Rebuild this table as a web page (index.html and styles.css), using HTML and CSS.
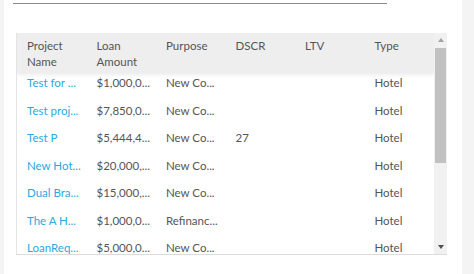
FILE: index.html
```html
<!DOCTYPE html>
<html lang="en">
<head>
  <meta charset="UTF-8" />
  <meta name="viewport" content="width=device-width, initial-scale=1.0"/>
  <title>Loan Requests</title>
  <link rel="stylesheet" href="styles.css">
</head>
<body>
  <div class="page">
    <div class="panel">
      <div class="rule"></div>
      <div class="grid-wrap">
        <div class="grid">
          <div class="grid-head">
            <div class="cell">Project Name</div>
            <div class="cell">Loan Amount</div>
            <div class="cell">Purpose</div>
            <div class="cell">DSCR</div>
            <div class="cell">LTV</div>
            <div class="cell">Type</div>
          </div>
          <div class="grid-body">
            <div class="row">
              <div class="cell"><a href="#" title="Test for project">Test for ...</a></div>
              <div class="cell">$1,000,0...</div>
              <div class="cell">New Co...</div>
              <div class="cell"></div>
              <div class="cell"></div>
              <div class="cell">Hotel</div>
            </div>
            <div class="row">
              <div class="cell"><a href="#" title="Test project">Test proj...</a></div>
              <div class="cell">$7,850,0...</div>
              <div class="cell">New Co...</div>
              <div class="cell"></div>
              <div class="cell"></div>
              <div class="cell">Hotel</div>
            </div>
            <div class="row">
              <div class="cell"><a href="#">Test P</a></div>
              <div class="cell">$5,444,4...</div>
              <div class="cell">New Co...</div>
              <div class="cell">27</div>
              <div class="cell"></div>
              <div class="cell">Hotel</div>
            </div>
            <div class="row">
              <div class="cell"><a href="#" title="New Hotel">New Hot...</a></div>
              <div class="cell">$20,000,...</div>
              <div class="cell">New Co...</div>
              <div class="cell"></div>
              <div class="cell"></div>
              <div class="cell">Hotel</div>
            </div>
            <div class="row">
              <div class="cell"><a href="#" title="Dual Brand Hotel">Dual Bra...</a></div>
              <div class="cell">$15,000,...</div>
              <div class="cell">New Co...</div>
              <div class="cell"></div>
              <div class="cell"></div>
              <div class="cell">Hotel</div>
            </div>
            <div class="row">
              <div class="cell"><a href="#" title="The A Hotel">The A H...</a></div>
              <div class="cell">$1,000,0...</div>
              <div class="cell">Refinanc...</div>
              <div class="cell"></div>
              <div class="cell"></div>
              <div class="cell">Hotel</div>
            </div>
            <div class="row">
              <div class="cell"><a href="#" title="LoanRequest">LoanReq...</a></div>
              <div class="cell">$5,000,0...</div>
              <div class="cell">New Co...</div>
              <div class="cell"></div>
              <div class="cell"></div>
              <div class="cell">Hotel</div>
            </div>
          </div>
        </div>
        <div class="scrollbar">
          <div class="sb-btn"><span class="arrow-up"></span></div>
          <div class="sb-track"><div class="sb-thumb"></div></div>
          <div class="sb-btn"><span class="arrow-down"></span></div>
        </div>
      </div>
    </div>
  </div>
</body>
</html>
```

FILE: styles.css
```css
body {
  margin: 0;
  background: #f4f4f4;
  font-family: Lato, "Open Sans", Arial, sans-serif;
  font-size: 11.5px;
  color: #555;
}
.page {
  height: 274px;
  display: flex;
}
.panel {
  width: 445px;
  margin-left: 4px;
  padding-left: 13px;
  background: #fff;
}
.rule {
  width: 374px;
  height: 1px;
  margin-top: 3px;
  margin-left: -4px;
  background: #8a8a8a;
}
.grid-wrap {
  margin-top: 29px;
  width: 430px;
  height: 221px;
  display: flex;
  border-left: 1px solid #e4e4e4;
  border-bottom: 1px solid #dcdcdc;
  margin-left: -1px;
}
.grid {
  flex: 1;
  overflow: hidden;
}
.grid-head {
  display: flex;
  height: 35px;
  padding-top: 5px;
  background: #eeeeee;
  box-shadow: 0 2px 4px rgba(0,0,0,0.08);
  position: relative;
  z-index: 2;
  line-height: 16px;
}
.grid-head .cell {
  white-space: normal;
}
.grid-body {
  margin-top: -4px;
}
.row {
  display: flex;
  height: 27.5px;
  align-items: center;
}
.cell {
  flex: 1;
  min-width: 0;
  padding: 0 6px 0 10px;
  white-space: nowrap;
  overflow: hidden;
}
.cell a {
  color: #2ba8df;
  text-decoration: none;
}
.scrollbar {
  width: 13px;
  background: #f1f1f1;
  display: flex;
  flex-direction: column;
}
.sb-btn {
  height: 14px;
  display: flex;
  align-items: center;
  justify-content: center;
}
.sb-track {
  flex: 1;
  padding: 1px 1px;
}
.sb-thumb {
  height: 115px;
  background: #c1c1c1;
}
.arrow-up {
  border-left: 3.5px solid transparent;
  border-right: 3.5px solid transparent;
  border-bottom: 4px solid #a3a3a3;
}
.arrow-down {
  border-left: 3.5px solid transparent;
  border-right: 3.5px solid transparent;
  border-top: 4px solid #505050;
}
```
